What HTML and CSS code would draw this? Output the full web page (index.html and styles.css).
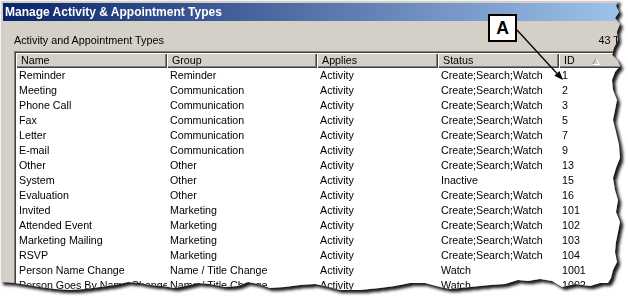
FILE: index.html
```html
<!DOCTYPE html>
<html lang="en">

<head>
	<meta charset="UTF-8">
	<meta name="viewport" content="width=device-width, initial-scale=1.0">
	<title>Manage Activity &amp; Appointment Types</title>
	<link rel="stylesheet" href="styles.css">
</head>

<body>
	<div class="paper">
		<div class="window">
			<div class="titlebar">Manage Activity &amp; Appointment Types</div>
			<div class="content">
				<div class="caption">
					<span>Activity and Appointment Types</span>
					<span>43 Types</span>
				</div>
				<div class="grid">
					<table>
						<colgroup>
							<col class="c-name">
							<col class="c-group">
							<col class="c-applies">
							<col class="c-status">
							<col>
						</colgroup>
						<thead>
							<tr>
								<th>Name</th>
								<th>Group</th>
								<th>Applies</th>
								<th>Status</th>
								<th>ID <svg class="sort" width="8" height="7" viewBox="0 0 8 7"><path d="M0.5 6.5 L4 0.5" stroke="#808080" fill="none"/><path d="M4 0.5 L7.5 6.5 L0.5 6.5" stroke="#ffffff" fill="none"/></svg></th>
							</tr>
						</thead>
						<tbody>
							<tr><td>Reminder</td><td>Reminder</td><td>Activity</td><td>Create;Search;Watch</td><td>1</td></tr>
							<tr><td>Meeting</td><td>Communication</td><td>Activity</td><td>Create;Search;Watch</td><td>2</td></tr>
							<tr><td>Phone Call</td><td>Communication</td><td>Activity</td><td>Create;Search;Watch</td><td>3</td></tr>
							<tr><td>Fax</td><td>Communication</td><td>Activity</td><td>Create;Search;Watch</td><td>5</td></tr>
							<tr><td>Letter</td><td>Communication</td><td>Activity</td><td>Create;Search;Watch</td><td>7</td></tr>
							<tr><td>E-mail</td><td>Communication</td><td>Activity</td><td>Create;Search;Watch</td><td>9</td></tr>
							<tr><td>Other</td><td>Other</td><td>Activity</td><td>Create;Search;Watch</td><td>13</td></tr>
							<tr><td>System</td><td>Other</td><td>Activity</td><td>Inactive</td><td>15</td></tr>
							<tr><td>Evaluation</td><td>Other</td><td>Activity</td><td>Create;Search;Watch</td><td>16</td></tr>
							<tr><td>Invited</td><td>Marketing</td><td>Activity</td><td>Create;Search;Watch</td><td>101</td></tr>
							<tr><td>Attended Event</td><td>Marketing</td><td>Activity</td><td>Create;Search;Watch</td><td>102</td></tr>
							<tr><td>Marketing Mailing</td><td>Marketing</td><td>Activity</td><td>Create;Search;Watch</td><td>103</td></tr>
							<tr><td>RSVP</td><td>Marketing</td><td>Activity</td><td>Create;Search;Watch</td><td>104</td></tr>
							<tr><td>Person Name Change</td><td>Name / Title Change</td><td>Activity</td><td>Watch</td><td>1001</td></tr>
							<tr><td>Person Goes By Name Change</td><td>Name / Title Change</td><td>Activity</td><td>Watch</td><td>1002</td></tr>
						</tbody>
					</table>
				</div>
			</div>
		</div>
	</div>

	<!-- callout -->
	<div class="callout">A</div>
	<svg class="pointer" width="628" height="303" viewBox="0 0 628 303">
		<line x1="517" y1="30" x2="557" y2="73.5" stroke="#000" stroke-width="1.3"/>
		<polygon points="563,80 554.3,75.8 559.5,71" fill="#000"/>
	</svg>
</body>

</html>
```

FILE: styles.css
```css
*,
*::before,
*::after {
	box-sizing: border-box;
}

body {
	margin: 0;
	background: #fff;
	font-family: "Liberation Sans", Arial, sans-serif;
	color: #000;
}

/* torn paper with shadow */
.paper {
	width: 650px;
	height: 303px;
	filter: drop-shadow(3px 3px 1.5px rgba(0, 0, 0, 0.9));
}

.window {
	width: 650px;
	height: 300px;
	background: #d4d0c8;
	border-top: 1px solid #f4f3ef;
	border-left: 1px solid #f4f3ef;
	padding: 2px 0 0 2px;
	overflow: hidden;
	clip-path: polygon(0 0, 618px 0, 616px 6px, 619px 12px, 615px 18px, 620px 24px, 617px 32px, 618px 40px, 614px 48px, 612px 55px, 617px 60px, 620px 66px, 615px 72px, 612px 80px, 613px 90px, 617px 100px, 615px 110px, 613px 120px, 616px 132px, 619px 145px, 620px 158px, 616px 168px, 613px 178px, 615px 190px, 618px 200px, 616px 212px, 620px 222px, 618px 232px, 616px 242px, 615px 252px, 617px 262px, 613px 270px, 611px 278px, 608px 283px, 600px 283px, 590px 286px, 575px 284px, 562px 287px, 552px 281px, 540px 279px, 528px 281px, 518px 280px, 505px 284px, 490px 285px, 470px 287px, 450px 289px, 440px 287px, 425px 283px, 410px 283px, 395px 286px, 380px 288px, 360px 290px, 340px 290px, 325px 286px, 315px 284px, 300px 285px, 285px 287px, 270px 288px, 258px 284px, 248px 282px, 238px 286px, 225px 287px, 210px 284px, 198px 283px, 185px 286px, 175px 288px, 162px 286px, 150px 285px, 140px 283px, 128px 282px, 115px 285px, 100px 287px, 85px 289px, 70px 290px, 55px 289px, 40px 287px, 28px 285px, 15px 283px, 0 282px);
}

.titlebar {
	height: 18px;
	padding-left: 2px;
	background: linear-gradient(to right, #0a246a, #a6caf0);
	color: #fff;
	font-weight: bold;
	font-size: 12px;
	line-height: 18px;
	white-space: nowrap;
}

.content {
	padding: 13px 8px 0 11px;
}

.caption {
	display: flex;
	justify-content: space-between;
	font-size: 10.8px;
	line-height: 13px;
	margin-bottom: 4px;
	white-space: nowrap;
}

.grid {
	border-top: 1px solid #808080;
	border-left: 1px solid #808080;
	padding: 1px 0 0 1px;
	background: #404040;
}

table {
	width: 100%;
	table-layout: fixed;
	border-collapse: collapse;
	background: #fff;
	font-size: 10.7px;
}

.c-name {
	width: 151px;
}

.c-group {
	width: 150px;
}

.c-applies,
.c-status {
	width: 121px;
}

th {
	height: 15px;
	padding: 0 0 0 5px;
	font-weight: normal;
	text-align: left;
	line-height: 13px;
	background: #d4d0c8;
	box-shadow: inset 1px 1px #fff, inset -1px -1px #404040, inset -2px -2px #808080;
	white-space: nowrap;
}

td {
	height: 15px;
	padding: 0 0 0 3px;
	line-height: 15px;
	white-space: nowrap;
	overflow: hidden;
}

.sort {
	margin-left: 14px;
	vertical-align: -0.5px;
}

.callout {
	position: absolute;
	left: 488px;
	top: 14px;
	width: 29px;
	height: 28px;
	border: 2px solid #000;
	background: #fff;
	font-weight: bold;
	font-size: 17.6px;
	line-height: 24px;
	text-align: center;
}

.pointer {
	position: absolute;
	left: 0;
	top: 0;
	pointer-events: none;
}
```
